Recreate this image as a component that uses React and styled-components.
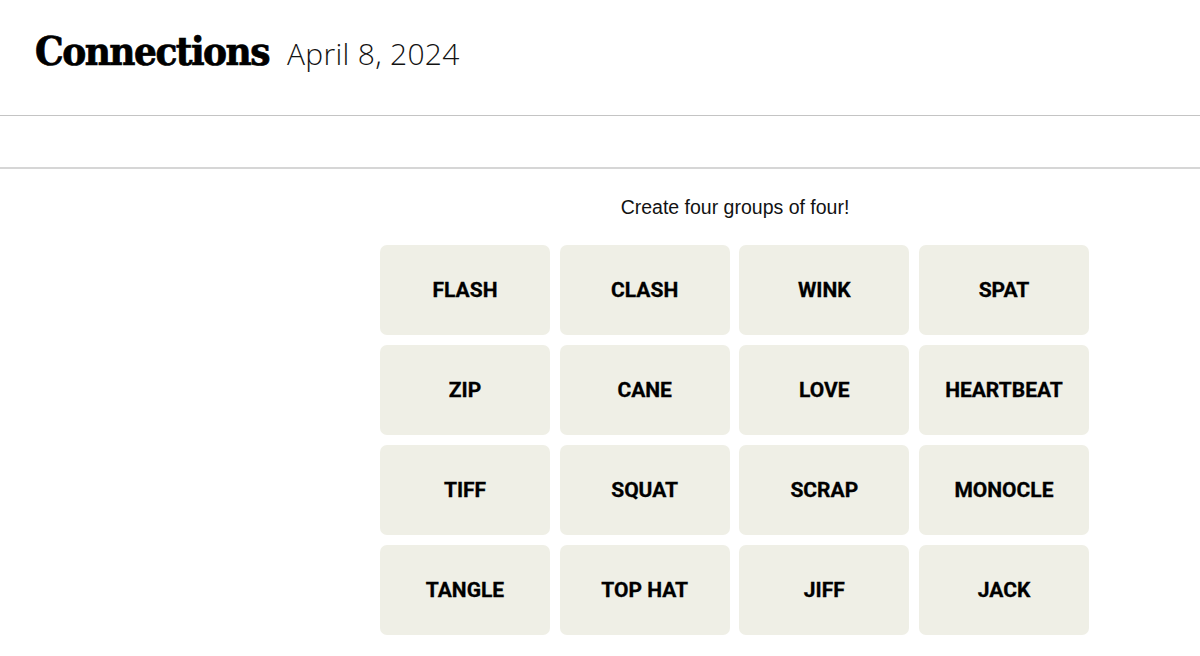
import React from 'react';
import styled, { createGlobalStyle } from 'styled-components';

const GlobalStyle = createGlobalStyle`
  html, body {
    margin: 0;
    padding: 0;
    background: #ffffff;
  }
  body {
    font-family: "Liberation Sans", Arial, sans-serif;
    color: #000000;
  }
`;

const Page = styled.div`
  width: 1200px;
  height: 656px;
  overflow: hidden;
`;

const Header = styled.header`
  height: 116px;
  border-bottom: 1px solid #c4c4c4;
  box-sizing: border-box;
  display: flex;
  align-items: baseline;
  padding: 31px 0 0 35px;
  gap: 18px;
`;

const Title = styled.h1`
  margin: 0;
  font-family: "DejaVu Serif Condensed", "DejaVu Serif", serif;
  font-stretch: condensed;
  font-weight: 700;
  font-size: 40px;
  letter-spacing: -1.5px;
  line-height: 1;
  -webkit-text-stroke: 0.7px #000;
`;

const DateLabel = styled.span`
  font-family: "Open Sans", "Liberation Sans", sans-serif;
  font-weight: 300;
  font-size: 30px;
  letter-spacing: 0.3px;
  line-height: 1;
  color: #121212;
`;

const Toolbar = styled.div`
  height: 53px;
  border-bottom: 2px solid #d6d6d6;
  box-sizing: border-box;
`;

const Board = styled.main`
  width: 710px;
  margin-left: 380px;
  display: flex;
  flex-direction: column;
  align-items: center;
`;

const Prompt = styled.p`
  margin: 26px 0 0;
  font-family: "Liberation Sans", Arial, sans-serif;
  font-size: 19.5px;
  line-height: 24px;
  color: #121212;
`;

const Grid = styled.div`
  margin-top: 26px;
  width: 100%;
  display: grid;
  grid-template-columns: repeat(4, 170px);
  grid-auto-rows: 90px;
  gap: 10px 9.66px;
`;

const Tile = styled.button`
  border: none;
  border-radius: 7px;
  background: #efefe6;
  font-family: Roboto, "Liberation Sans", Arial, sans-serif;
  font-weight: 700;
  font-size: 21px;
  color: #000000;
  text-transform: uppercase;
  cursor: pointer;
  padding: 0;
  -webkit-text-stroke: 0.3px #000;
`;

const words = [
  'Flash', 'Clash', 'Wink', 'Spat',
  'Zip', 'Cane', 'Love', 'Heartbeat',
  'Tiff', 'Squat', 'Scrap', 'Monocle',
  'Tangle', 'Top Hat', 'Jiff', 'Jack',
];

const App = () => (
  <Page>
    <GlobalStyle />
    <Header>
      <Title>Connections</Title>
      <DateLabel>April 8, 2024</DateLabel>
    </Header>
    <Toolbar />
    <Board>
      <Prompt>Create four groups of four!</Prompt>
      <Grid>
        {words.map((w) => (
          <Tile key={w} type="button">{w}</Tile>
        ))}
      </Grid>
    </Board>
  </Page>
);

export default App;
